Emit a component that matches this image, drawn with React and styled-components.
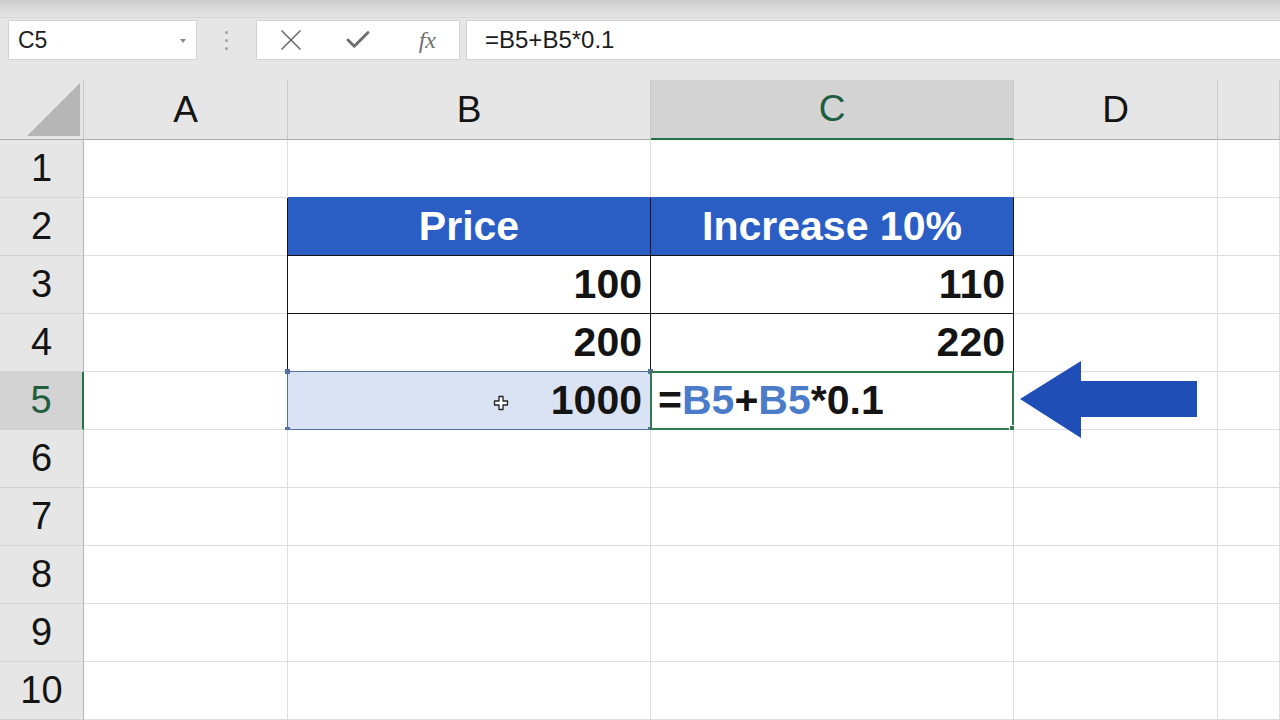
import styled, { createGlobalStyle } from 'styled-components'
import { X, Check } from 'lucide-react'

const GREEN = '#217346'
const TABLE_BLUE = '#2b5ec4'
const GRID = '#dedede'
const INK = '#141414'

const GlobalStyle = createGlobalStyle`
  html, body { margin: 0; padding: 0; }
  body {
    background: #e6e6e6;
    overflow: hidden;
    font-family: "Liberation Sans", Arial, sans-serif;
  }
`

const rows = [
  { n: 1 },
  { n: 2, b: 'Price', c: 'Increase 10%', head: true },
  { n: 3, b: '100', c: '110' },
  { n: 4, b: '200', c: '220' },
  { n: 5, b: '1000', formula: true },
  { n: 6 },
  { n: 7 },
  { n: 8 },
  { n: 9 },
  { n: 10 },
]

const App = () => {
  return (
    <Window>
      <GlobalStyle />
      <TopStrip />
      <FormulaBar>
        <NameBox>
          C5
          <Caret />
        </NameBox>
        <Grip>
          <i />
          <i />
          <i />
        </Grip>
        <ButtonBox>
          <IconSlot><X size={36} strokeWidth={1.1} /></IconSlot>
          <IconSlot><Check size={30} strokeWidth={2.3} /></IconSlot>
          <IconSlot><Fx>fx</Fx></IconSlot>
        </ButtonBox>
        <FormulaInput>=B5+B5*0.1</FormulaInput>
      </FormulaBar>

      <Sheet>
        <Corner><Triangle /></Corner>
        {['A', 'B', 'C', 'D', ''].map((col) => (
          <ColHead key={col || 'E'} $active={col === 'C'}>{col}</ColHead>
        ))}

        {rows.map((row) => (
          <Row key={row.n} row={row} />
        ))}
      </Sheet>

      <Arrow width="178" height="77" viewBox="0 0 178 77">
        <polygon points="0,38 61,0 61,20 177,20 177,56 61,56 61,77" fill="#1f4fb6" />
      </Arrow>
    </Window>
  )
}

const Row = ({ row }) => {
  const inTable = row.n >= 2 && row.n <= 5
  const tone = row.head ? 'head' : inTable ? 'data' : 'plain'
  return (
    <>
      <RowHead $active={row.n === 5}>{row.n}</RowHead>
      <Cell />
      <Cell $tone={row.formula ? 'ref' : tone} $boxed={inTable} $leftEdge={inTable} $align={row.head ? 'center' : 'right'}>
        {row.b}
        {row.formula && (
          <RefFrame>
            <Cursor width="16" height="16" viewBox="0 0 16 16">
              <path d="M6 1.5h4v4.5h4.5v4H10v4.5H6V10H1.5V6H6z" fill="#fff" stroke="#222" strokeWidth="1.3" strokeLinejoin="round" />
            </Cursor>
            <Handle $x="left" $y="top" />
            <Handle $x="right" $y="top" />
            <Handle $x="left" $y="bottom" />
            <Handle $x="right" $y="bottom" />
          </RefFrame>
        )}
      </Cell>
      <Cell $tone={row.formula ? 'active' : tone} $boxed={inTable} $align={row.head ? 'center' : row.formula ? 'left' : 'right'}>
        {row.formula ? (
          <>
            =<Ref>B5</Ref>+<Ref>B5</Ref>*0.1
            <ActiveFrame><FillHandle /></ActiveFrame>
          </>
        ) : (
          row.c
        )}
      </Cell>
      <Cell />
      <Cell />
    </>
  )
}

const Window = styled.div`
  position: relative;
  width: 1280px;
  height: 720px;
  display: flex;
  flex-direction: column;
  background: #e6e6e6;
`

const TopStrip = styled.div`
  height: 17px;
  background: linear-gradient(#cdcdcd, #dedede 70%, #e4e4e4);
  border-bottom: 1px solid #d6d6d6;
`

const FormulaBar = styled.div`
  height: 40px;
  margin: 2px 0 20px;
  padding-left: 8px;
  display: flex;
  align-items: stretch;
`

const Box = styled.div`
  background: #fff;
  border: 1px solid #d2d2d2;
  box-sizing: border-box;
  display: flex;
  align-items: center;
`

const NameBox = styled(Box)`
  width: 189px;
  padding: 0 10px 0 9px;
  justify-content: space-between;
  font-size: 23px;
  color: #222;
`

const Caret = styled.span`
  width: 0;
  height: 0;
  border-left: 3px solid transparent;
  border-right: 3px solid transparent;
  border-top: 4px solid #8a8a8a;
  margin-top: 2px;
`

const Grip = styled.div`
  width: 59px;
  display: flex;
  flex-direction: column;
  align-items: center;
  justify-content: center;
  gap: 5px;

  i {
    width: 3px;
    height: 3px;
    background: #a0a0a0;
    border-radius: 50%;
  }
`

const ButtonBox = styled(Box)`
  width: 204px;
  margin-right: 6px;
  color: #6e6e6e;
`

const IconSlot = styled.div`
  width: 68px;
  display: flex;
  justify-content: center;
  align-items: center;
`

const Fx = styled.span`
  font-family: "Liberation Serif", "Times New Roman", serif;
  font-style: italic;
  font-size: 24px;
  color: #707070;
  margin-right: -4px;
`

const FormulaInput = styled(Box)`
  flex: 1;
  border-right: none;
  padding-left: 18px;
  font-size: 24px;
  color: #1d1d1d;
`

const Sheet = styled.div`
  flex: 1;
  display: grid;
  grid-template-columns: 84px 204px 363px 363px 204px 1fr;
  grid-template-rows: 60px repeat(10, 58px);
  background: #fff;
`

const Corner = styled.div`
  background: #e6e6e6;
  border-right: 1px solid #c9c9c9;
  border-bottom: 1px solid #ababab;
  display: flex;
  align-items: flex-end;
  justify-content: flex-end;
  padding: 0 3px 3px 0;
`

const Triangle = styled.div`
  width: 53px;
  height: 53px;
  background: #b6b6b6;
  clip-path: polygon(100% 0, 100% 100%, 0 100%);
`

const ColHead = styled.div`
  display: flex;
  align-items: center;
  justify-content: center;
  font-size: 37px;
  background: ${(p) => (p.$active ? '#d3d3d3' : '#e6e6e6')};
  color: ${(p) => (p.$active ? '#1f5e3e' : INK)};
  border-right: 1px solid #c9c9c9;
  border-bottom: ${(p) => (p.$active ? `2px solid ${GREEN}` : '1px solid #ababab')};
`

const RowHead = styled.div`
  display: flex;
  align-items: center;
  justify-content: center;
  font-size: 38px;
  background: ${(p) => (p.$active ? '#d3d3d3' : '#e6e6e6')};
  color: ${(p) => (p.$active ? '#1f5e3e' : INK)};
  border-right: ${(p) => (p.$active ? `2px solid ${GREEN}` : '1px solid #b4b4b4')};
  border-bottom: 1px solid #d3d3d3;
`

const toneBg = {
  plain: '#fff',
  data: '#fff',
  head: TABLE_BLUE,
  ref: '#dae3f3',
  active: '#fff',
}

const Cell = styled.div`
  position: relative;
  display: flex;
  align-items: center;
  justify-content: ${(p) => (p.$align === 'center' ? 'center' : p.$align === 'left' ? 'flex-start' : 'flex-end')};
  padding: 0 ${(p) => (p.$align === 'right' ? '8px' : '0')} 0 ${(p) => (p.$align === 'left' ? '7px' : '0')};
  background: ${(p) => toneBg[p.$tone || 'plain']};
  color: ${(p) => (p.$tone === 'head' ? '#fff' : INK)};
  font-size: 41px;
  font-weight: 700;
  border-right: 1px solid ${(p) => (p.$boxed ? INK : GRID)};
  border-bottom: 1px solid ${(p) => (p.$boxed ? INK : GRID)};
  box-shadow: ${(p) => {
    const list = []
    if (p.$leftEdge) list.push(`-1px 0 0 ${INK}`)
    if (p.$tone === 'head') list.push(`0 -1px 0 ${TABLE_BLUE}`)
    return list.length ? list.join(', ') : 'none'
  }};
`

const Ref = styled.span`
  color: #4a7cc9;
`

const RefFrame = styled.div`
  position: absolute;
  inset: -1px -1px -1px -1px;
  border: 1.5px solid #55709f;
  pointer-events: none;
`

const Handle = styled.span`
  position: absolute;
  width: 5px;
  height: 5px;
  background: #55709f;
  ${(p) => (p.$x === 'left' ? 'left: -3px;' : 'right: -3px;')}
  ${(p) => (p.$y === 'top' ? 'top: -3px;' : 'bottom: -3px;')}
`

const Cursor = styled.svg`
  position: absolute;
  left: 205px;
  top: 23px;
`

const ActiveFrame = styled.div`
  position: absolute;
  inset: -1px -1px -1px -1px;
  border: 2px solid #2f7a4e;
  pointer-events: none;
`

const FillHandle = styled.span`
  position: absolute;
  right: -5px;
  bottom: -5px;
  width: 6px;
  height: 6px;
  background: #2f7a4e;
  border: 1px solid #fff;
`

const Arrow = styled.svg`
  position: absolute;
  left: 1020px;
  top: 361px;
`

export default App
